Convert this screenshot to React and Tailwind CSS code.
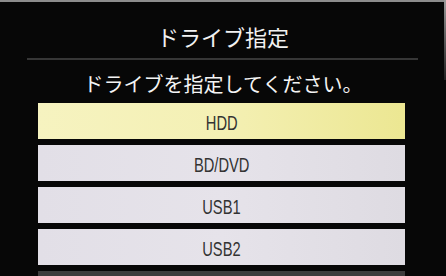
import React from "react";

const rows = [
  { label: "HDD", active: true },
  { label: "BD/DVD" },
  { label: "USB1" },
  { label: "USB2" },
];

export default function App() {
  return (
    <div className="relative w-[446px] h-[276px] overflow-hidden bg-[#070707]">
      <div className="h-[2px] bg-[#8c8c8c]" />
      <div
        className="pt-[19px] text-center text-[22px] leading-[30px] text-[#f2f2f2]"
        style={{ fontFamily: '"Noto Sans CJK JP", "Noto Sans", sans-serif' }}
      >
        ドライブ指定
      </div>
      <div className="mt-[7px] ml-[27px] w-[391px] h-[2px] bg-[#363636]" />
      <div
        className="mt-[10px] text-center text-[20px] leading-[28px] text-[#f4f4f4]"
        style={{ fontFamily: '"Noto Sans CJK JP", "Noto Sans", sans-serif' }}
      >
        ドライブを指定してください。
      </div>
      <div className="mt-[5px] ml-[38px] w-[367px] flex flex-col gap-[6px]">
        {rows.map((r) => (
          <div
            key={r.label}
            className={
              "h-[36px] flex items-center justify-center " +
              (r.active
                ? "bg-gradient-to-r from-[#f6f3c0] via-[#f4f0b4] to-[#ece792]"
                : "bg-gradient-to-r from-[#e2dfe7] via-[#e6e3ea] to-[#dedbe2]")
            }
          >
            <span
              className="inline-block scale-x-[0.7] pt-[3px] text-[21px] leading-[24px] text-[#333333]"
              style={{ fontFamily: '"Liberation Sans", Arial, sans-serif' }}
            >
              {r.label}
            </span>
          </div>
        ))}
        <div className="h-[10px] bg-[#3c3c3c]" />
      </div>
      <div className="absolute right-0 top-0 w-[2px] h-[80px] bg-gradient-to-b from-[#9a9a9a] to-[#222222]" />
    </div>
  );
}
